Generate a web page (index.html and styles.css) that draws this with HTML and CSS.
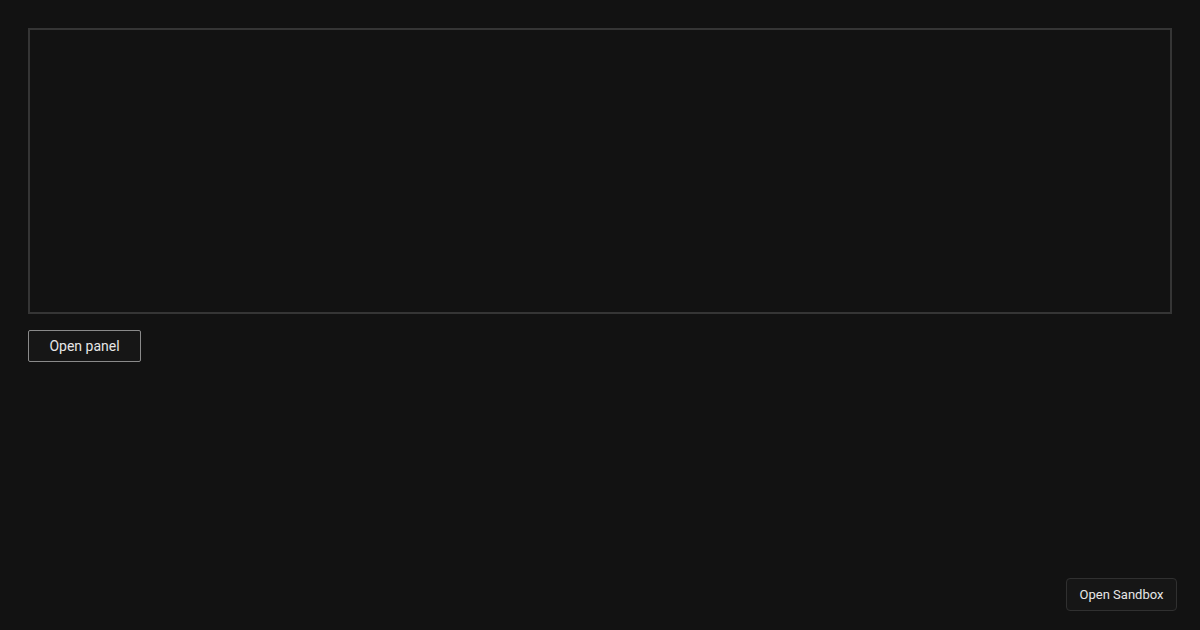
FILE: index.html
```html
<!DOCTYPE html>
<html lang="en">
<head>
    <meta charset="UTF-8">
    <meta name="viewport" content="width=device-width, initial-scale=1.0">
    <title>Panel</title>
    <link rel="stylesheet" href="styles.css">
</head>
<body>
    <div class="frame"></div>
    <button class="panel-btn">Open panel</button>

    <!-- sandbox link, bottom right -->
    <button class="sandbox-btn">Open Sandbox</button>
</body>
</html>
```

FILE: styles.css
```css
body {
    margin: 0;
    padding: 28px;
    background-color: #121212;
    color: #e6e6e6;
    font-family: Roboto, "Noto Sans", sans-serif;
}
.frame { height: 282px; border: 2px solid #353535; }
.panel-btn {
    display: block;
    margin-top: 16px;
    width: 113px;
    height: 32px;
    padding: 0 0 1px;
    background: #161616;
    color: #e6e6e6;
    border: 1px solid #8a8a8a;
    border-radius: 2px;
    font-family: inherit;
    font-size: 14px;
}
.sandbox-btn {
    position: fixed;
    right: 23px;
    bottom: 19px;
    width: 111px;
    height: 33px;
    padding: 0 0 1px;
    background: #161616;
    color: #e6e6e6;
    border: 1px solid #303030;
    border-radius: 4px;
    font-family: inherit;
    font-size: 13px;
}
```
